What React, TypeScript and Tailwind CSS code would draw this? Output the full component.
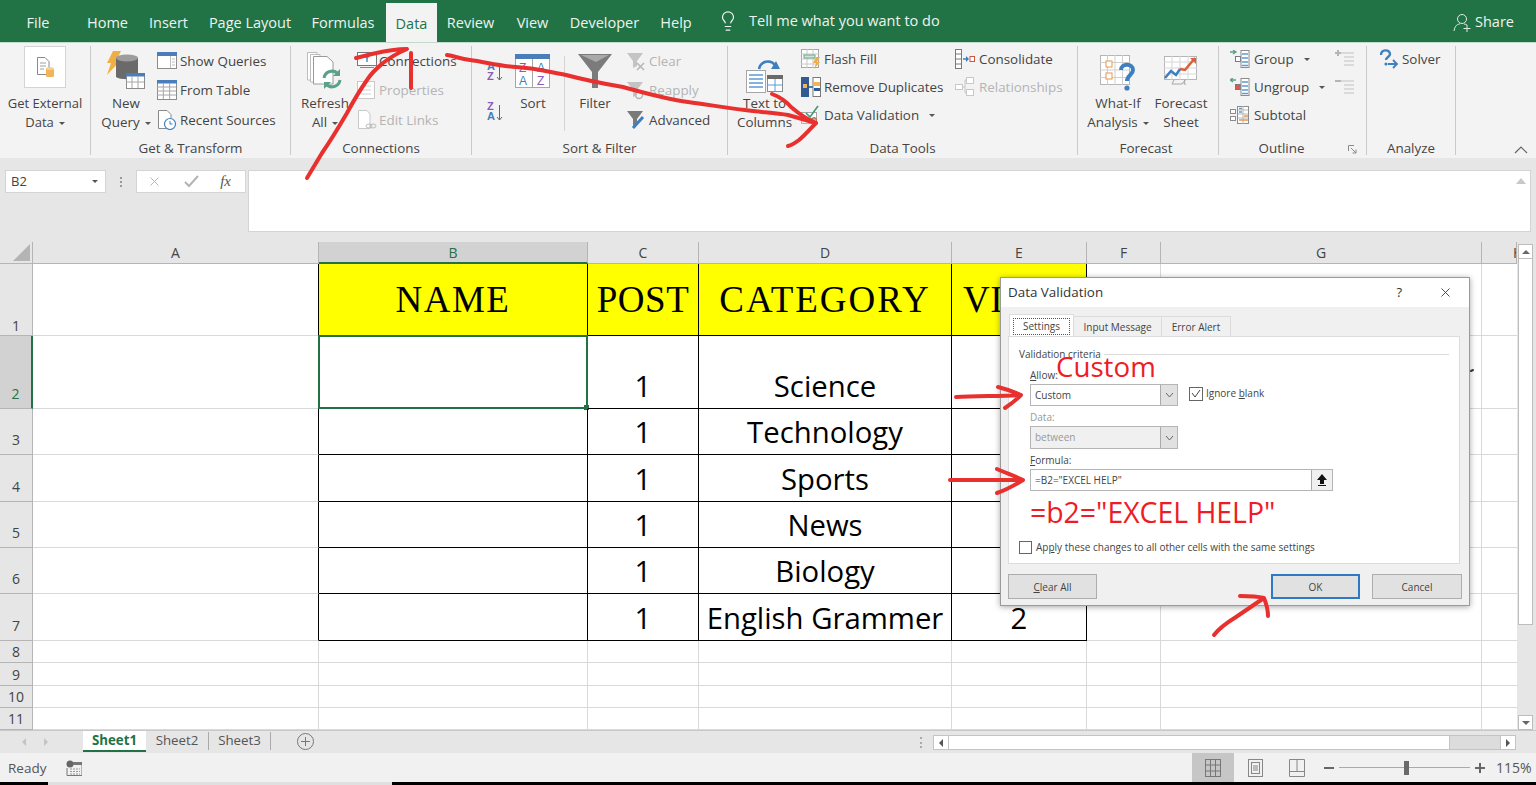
import type { ReactNode } from "react";
import clsx from "clsx";
import { Lightbulb, X } from "lucide-react";

const tabs = [
  { name: "File", w: "w-[76px] pt-[4px]" },
  { name: "Home", w: "w-[63px] pt-[4px]" },
  { name: "Insert", w: "w-[59px] pt-[4px]" },
  { name: "Page Layout", w: "w-[104px] pt-[4px]" },
  { name: "Formulas", w: "w-[82px] pt-[4px]" },
  { name: "Data", w: "w-[51px] ml-[2px] mt-[3px] pt-[2px] bg-[#f3f3f3] text-[#217346]" },
  { name: "Review", w: "w-[67px] pt-[4px]" },
  { name: "View", w: "w-[55px] ml-[1px] pt-[4px]" },
  { name: "Developer", w: "w-[89px] pt-[4px]" },
  { name: "Help", w: "w-[54px] pt-[4px]" },
];

const Svg = ({ w, h, children, className }: { w: number; h: number; children: ReactNode; className?: string }) => (
  <svg width={w} height={h} viewBox={`0 0 ${w} ${h}`} fill="none" className={clsx("shrink-0", className)}>
    {children}
  </svg>
);

// little table with a blue header, used by a few of the ribbon icons
const MiniTable = ({ x, y, w, h, cols = 3, rows = 3, head = "#4a7ebb" }: { x: number; y: number; w: number; h: number; cols?: number; rows?: number; head?: string }) => (
  <g>
    <rect x={x + 0.5} y={y + 0.5} width={w} height={h} fill="#fff" stroke="#8c8c8c" />
    <rect x={x} y={y} width={w + 1} height={3.5} fill={head} />
    {Array.from({ length: cols - 1 }).map((_, i) => (
      <path key={i} d={`M${x + ((i + 1) * w) / cols} ${y + 3}V${y + h}`} stroke="#a6a6a6" />
    ))}
    {Array.from({ length: rows - 1 }).map((_, i) => (
      <path key={i} d={`M${x} ${y + 3 + ((i + 1) * (h - 3)) / rows}H${x + w}`} stroke="#a6a6a6" />
    ))}
  </g>
);

const Funnel = ({ color = "#7a7a7a" }: { color?: string }) => <path d="M1 2H17L11 10V15L7 17V10Z" fill={color} />;

const ExternalDataIcon = () => (
  <div className="flex h-[42px] w-[42px] items-center justify-center border border-[#d4d4d4] bg-white">
    <Svg w={20} h={22}>
      <path d="M2.5 1.5H10L14 5.5V18.5H2.5Z" fill="#fff" stroke="#8a8a8a" />
      <path d="M5 7H11M5 10H11M5 13H9" stroke="#a0a0a0" />
      <rect x="11" y="12" width="8" height="9" rx="1.5" fill="#f0b45a" />
      <ellipse cx="15" cy="12.5" rx="4" ry="1.6" fill="#f7d08f" />
    </Svg>
  </div>
);

const NewQueryIcon = () => (
  <Svg w={40} h={40}>
    <path d="M7 1H15L10 11H14L1 25L5 13H1Z" fill="#f0ae46" />
    <path d="M10 8C14 5 28 5 32 8V27C28 30 14 30 10 27Z" fill="#6a6a6a" />
    <ellipse cx="21" cy="8" rx="11" ry="3.4" fill="#9d9d9d" />
    <MiniTable x={20} y={23} w={18} h={15} cols={3} rows={2} />
  </Svg>
);

const ShowQueriesIcon = () => (
  <Svg w={20} h={17}>
    <rect x="0.5" y="0.5" width="19" height="16" fill="#fff" stroke="#8c8c8c" />
    <rect x="0" y="0" width="20" height="4" fill="#4a7ebb" />
    <path d="M13.5 4V16" stroke="#bcbcbc" />
    <path d="M15 7H18M15 10H18M15 13H18" stroke="#bcbcbc" />
  </Svg>
);

const FromTableIcon = () => (
  <Svg w={20} h={20}>
    <MiniTable x={0} y={0} w={19} h={19} cols={3} rows={4} />
  </Svg>
);

const RecentIcon = () => (
  <Svg w={20} h={20}>
    <path d="M1.5 0.5H10L14 4.5V18.5H1.5Z" fill="#fff" stroke="#8a8a8a" />
    <circle cx="13" cy="14" r="5.5" fill="#fff" stroke="#3f7fbf" strokeWidth="1.2" />
    <path d="M13 11V14H15.5" stroke="#3f7fbf" />
  </Svg>
);

const RefreshIcon = () => (
  <Svg w={38} h={40}>
    <path d="M1.5 1.5H11V29H1.5Z" fill="#fff" stroke="#bdbdbd" />
    <path d="M4.5 3.5H14V31H4.5Z" fill="#fff" stroke="#bdbdbd" />
    <path d="M7.5 5.5H21L27 11V33H7.5Z" fill="#fff" stroke="#9a9a9a" />
    <path d="M18 27A8 8 0 0 1 32 23" stroke="#5aa287" strokeWidth="3" />
    <path d="M34 29A8 8 0 0 1 20 33" stroke="#5aa287" strokeWidth="3" />
    <path d="M34 18V25H27Z" fill="#5aa287" />
    <path d="M18 38V31H25Z" fill="#5aa287" />
  </Svg>
);

const ConnectionsIcon = () => (
  <Svg w={20} h={17}>
    <rect x="0.5" y="0.5" width="19" height="13" fill="#fff" stroke="#777" />
    <path d="M6 3H14L10 7Z" fill="#4a90c8" />
    <path d="M10 6V10" stroke="#4a90c8" strokeWidth="1.5" />
    <path d="M3 15.5H17" stroke="#888" />
  </Svg>
);

const PropertiesIcon = () => (
  <Svg w={20} h={20}>
    <rect x="0.5" y="1.5" width="17" height="17" fill="#fff" stroke="#c8c8c8" />
    <path d="M4 6H14M4 10H14M4 14H14" stroke="#d0d0d0" />
  </Svg>
);

const EditLinksIcon = () => (
  <Svg w={20} h={20}>
    <path d="M1.5 0.5H10L13 4V18.5H1.5Z" fill="#fff" stroke="#c8c8c8" />
    <ellipse cx="12" cy="16" rx="3" ry="2" stroke="#bcbcbc" />
    <ellipse cx="16" cy="16" rx="3" ry="2" stroke="#bcbcbc" />
  </Svg>
);

const AzIcon = ({ top, bottom }: { top: string; bottom: string }) => (
  <Svg w={16} h={22}>
    <text x="0" y="9.5" fontSize="11" fontWeight="700" fontFamily="Liberation Sans" fill={top === "A" ? "#3f7fbf" : "#8a5cb8"}>{top}</text>
    <text x="0" y="20" fontSize="11" fontWeight="700" fontFamily="Liberation Sans" fill={bottom === "A" ? "#3f7fbf" : "#8a5cb8"}>{bottom}</text>
    <path d="M12.5 5V20M10 17L12.5 20L15 17" stroke="#666" />
  </Svg>
);

const SortIcon = () => (
  <Svg w={36} h={34}>
    <rect x="0.5" y="0.5" width="34" height="33" fill="#fff" stroke="#a6a6a6" />
    <rect x="0" y="0" width="35" height="5" fill="#4a7ebb" />
    <path d="M17.5 5V33" stroke="#a6a6a6" />
    <text x="4" y="18" fontSize="12" fontFamily="Liberation Sans" fill="#8a5cb8">Z</text>
    <text x="4" y="31" fontSize="12" fontFamily="Liberation Sans" fill="#3f7fbf">A</text>
    <text x="22" y="18" fontSize="12" fontFamily="Liberation Sans" fill="#3f7fbf">A</text>
    <text x="22" y="31" fontSize="12" fontFamily="Liberation Sans" fill="#8a5cb8">Z</text>
  </Svg>
);

const FilterIcon = () => (
  <Svg w={34} h={34}>
    <path d="M0 0H34L20 18V34H14V18Z" fill="#7b7b7b" />
    <path d="M3 1H31L18 8Z" fill="#a9a9a9" />
  </Svg>
);

const ClearIcon = () => (
  <Svg w={20} h={20}>
    <Funnel color="#c4c4c4" />
    <path d="M11 12L18 19M18 12L11 19" stroke="#b5b5b5" strokeWidth="1.5" />
  </Svg>
);

const ReapplyIcon = () => (
  <Svg w={20} h={20}>
    <Funnel color="#c4c4c4" />
    <circle cx="13" cy="15" r="3.5" stroke="#b5b5b5" strokeWidth="1.5" />
  </Svg>
);

const AdvancedIcon = () => (
  <Svg w={20} h={21}>
    <Funnel />
    <path d="M17 8L7 19" stroke="#3f7fbf" strokeWidth="3" />
  </Svg>
);

const TextColumnsIcon = () => (
  <Svg w={38} h={34}>
    <rect x="0.5" y="10.5" width="19" height="22" fill="#fff" stroke="#a6a6a6" />
    <path d="M3 15H17M3 19H17M3 23H17M3 27H17" stroke="#5d9ad6" strokeWidth="1.5" />
    <rect x="21.5" y="15.5" width="15" height="16" fill="#fff" stroke="#8c8c8c" />
    <rect x="21" y="15" width="16" height="4" fill="#6a6a6a" />
    <path d="M29 19V31M21 25H37" stroke="#5d9ad6" />
    <path d="M13 9A9 9 0 0 1 29 5" stroke="#3f7fbf" strokeWidth="2.5" />
    <path d="M25 9H34L30 1Z" fill="#3f7fbf" />
  </Svg>
);

const FlashFillIcon = () => (
  <Svg w={20} h={20}>
    <rect x="0.5" y="0.5" width="17" height="18" fill="#fff" stroke="#a6a6a6" />
    <path d="M0 5H18M0 10H18M0 15H18M6 0V19M12 0V19" stroke="#c8c8c8" />
    <rect x="3" y="6" width="11" height="3" fill="#cfe5d8" stroke="#6aa88a" />
    <path d="M15 8H19L16 13H19L13 20L15 14H12Z" fill="#f0ae46" />
  </Svg>
);

const RemoveDupIcon = () => (
  <Svg w={20} h={20}>
    <rect x="0" y="0" width="8" height="20" fill="#2f5a94" />
    <rect x="2" y="7" width="4" height="4" fill="#f0b45a" />
    <path d="M8 10H13" stroke="#3f7fbf" strokeWidth="2" />
    <rect x="12" y="0.5" width="7.5" height="19" fill="#fff" stroke="#7a7a7a" />
    <rect x="13" y="5" width="6" height="4" fill="#f0b45a" />
    <rect x="13" y="11" width="6" height="3" fill="#2f5a94" />
  </Svg>
);

const DataValIcon = () => (
  <Svg w={20} h={20}>
    <rect x="0.5" y="7.5" width="15" height="6" fill="#fff" stroke="#a6a6a6" />
    <path d="M5 8L9 12L17 1" stroke="#3f9a75" strokeWidth="1.6" />
    <rect x="0.5" y="14.5" width="15" height="4" fill="#f4f4f4" stroke="#b5b5b5" />
    <circle cx="13" cy="15" r="2.5" stroke="#d0563a" />
  </Svg>
);

const ConsolidateIcon = () => (
  <Svg w={20} h={20}>
    <rect x="0.5" y="0.5" width="6" height="19" fill="#fff" stroke="#7a7a7a" />
    <path d="M0 5H7M0 10H7M0 15H7" stroke="#7a7a7a" />
    <path d="M8 10H13" stroke="#3f7fbf" strokeWidth="1.5" />
    <path d="M11 7L14 10L11 13Z" fill="#3f7fbf" />
    <rect x="15" y="7.5" width="4.5" height="5" fill="#fff" stroke="#d0563a" />
  </Svg>
);

const RelationshipsIcon = () => (
  <Svg w={20} h={20}>
    <rect x="0.5" y="7.5" width="7" height="5" fill="#fff" stroke="#c8c8c8" />
    <rect x="11.5" y="0.5" width="7" height="6" fill="#fff" stroke="#c8c8c8" />
    <rect x="11.5" y="12.5" width="7" height="6" fill="#fff" stroke="#c8c8c8" />
    <path d="M8 10H10V3H11M10 10V16H11" stroke="#c8c8c8" />
  </Svg>
);

const WhatIfIcon = () => (
  <Svg w={36} h={36}>
    <rect x="0.5" y="0.5" width="29" height="29" fill="#fff" stroke="#b5b5b5" />
    <path d="M0 7.5H30M0 15H30M0 22.5H30M7.5 0V30M15 0V30M22.5 0V30" stroke="#cfcfcf" />
    <rect x="6" y="6" width="6" height="6" fill="#fff" stroke="#e8964a" />
    <rect x="6" y="18" width="6" height="6" fill="#fff" stroke="#e8964a" />
    <path d="M21 15C21 8 33 8 33 15C33 20 27 20 27 26" stroke="#3f7fbf" strokeWidth="4" />
    <circle cx="27" cy="33" r="2.6" fill="#3f7fbf" />
  </Svg>
);

const ForecastIcon = () => (
  <Svg w={34} h={29}>
    <rect x="0.5" y="0.5" width="32" height="23" fill="#fff" stroke="#b5b5b5" />
    <path d="M0 6H33M0 12H33M0 18H33M8 0V24M16 0V24M24 0V24" stroke="#d6d6d6" />
    <path d="M1 22L7 15L12 19L16 13" stroke="#3f7fbf" strokeWidth="2.5" />
    <path d="M16 13L21 14L26 8L31 2" stroke="#d8603c" strokeWidth="2.5" />
    <path d="M26 2H32V8Z" fill="#d8603c" />
    <path d="M10 24L8 28H18L21 24M21 24L20 28H22" stroke="#a6a6a6" />
  </Svg>
);

const GroupIcon = ({ plus = true }: { plus?: boolean }) => (
  <Svg w={20} h={18}>
    <path d={plus ? "M0 2H5M3 0L6 2L3 4" : "M6 2H1M3 0L0 2L3 4"} stroke="#5aa287" strokeWidth="1.3" />
    <rect x="5.5" y="6.5" width="5" height="5" fill={plus ? "#fff" : "#e2574c"} stroke="#7a7a7a" />
    <rect x="11" y="0.5" width="8" height="17" fill="#fff" stroke="#8c8c8c" />
    <path d="M12 4H18M12 8H18M12 12H18M12 15.5H18" stroke="#5d9ad6" strokeWidth="1.4" />
  </Svg>
);

const SubtotalIcon = () => (
  <Svg w={20} h={18}>
    <rect x="0.5" y="3.5" width="5" height="4" fill="#fff" stroke="#8c8c8c" />
    <rect x="0.5" y="10.5" width="5" height="4" fill="#fff" stroke="#8c8c8c" />
    <rect x="7.5" y="0.5" width="11" height="17" fill="#fff" stroke="#8c8c8c" />
    <path d="M8 4H18M8 8H18M8 12H18M13 0V18" stroke="#b5b5b5" />
    <path d="M14 10H18M9 14H18" stroke="#e8964a" strokeWidth="1.5" />
    <path d="M9 2.5H12M9 6H12" stroke="#5d9ad6" strokeWidth="1.5" />
  </Svg>
);

const OutlineSmall = ({ plus }: { plus?: boolean }) => (
  <Svg w={20} h={18}>
    <path d="M6 3H19M9 7H19M9 11H19M9 15H19" stroke="#d2d2d2" strokeWidth="1.5" />
    <path d={plus ? "M0 3H6M3 0V6" : "M0 3H6"} stroke="#b5b5b5" strokeWidth="2" />
  </Svg>
);

const SolverIcon = () => (
  <Svg w={20} h={20}>
    <path d="M2 6C2 0 11 0 11 5C11 8 7 8 7 11" stroke="#3f7fbf" strokeWidth="2.4" />
    <circle cx="7" cy="15" r="1.6" fill="#3f7fbf" />
    <path d="M9 15H18M14 11L18 15L14 19" stroke="#3f7fbf" strokeWidth="1.8" />
  </Svg>
);

const Caret = ({ className }: { className?: string }) => (
  <span className={clsx("inline-block h-0 w-0 border-x-[3px] border-t-[3px] border-x-transparent border-t-[#555] align-middle", className)} />
);

const Row = ({ icon, label, muted, caret, iconW = "w-[23px]", h = "h-[29.5px]" }: { icon: ReactNode; label: string; muted?: boolean; caret?: string; iconW?: string; h?: string }) => (
  <div className={clsx("flex items-center whitespace-nowrap", h, muted && "text-[#b4b4b4]")}>
    <span className={clsx("flex shrink-0 items-center", iconW)}>{icon}</span>
    {label}
    {caret && <Caret className={caret} />}
  </div>
);

const BigButton = ({ icon, lines, caret, className, iconClass }: { icon: ReactNode; lines: string[]; caret?: boolean; className: string; iconClass?: string }) => (
  <div className={clsx("flex shrink-0 flex-col items-center whitespace-nowrap leading-[19px]", className)}>
    <div className={clsx("flex h-[48px] items-start", iconClass)}>{icon}</div>
    {lines.map((l, i) => (
      <div key={l}>
        {l}
        {caret && i === lines.length - 1 && <Caret className="ml-[5px]" />}
      </div>
    ))}
  </div>
);

const Group = ({ w, label, children, corner, labelClass }: { w: string; label?: string; children: ReactNode; corner?: boolean; labelClass?: string }) => (
  <div className={clsx("relative flex shrink-0 flex-col border-r border-[#c9c9c9]", w)}>
    <div className="flex h-[95px]">{children}</div>
    <div className={clsx("text-center leading-[14px]", labelClass)}>{label}</div>
    {corner && (
      <Svg w={9} h={9} className="absolute bottom-[1px] right-[9px]">
        <path d="M0.5 6V0.5H6M3 3L8 8M8 4.5V8H4.5" stroke="#8a8a8a" />
      </Svg>
    )}
  </div>
);

const Ribbon = () => (
  <div className="flex h-[116px] border-t border-[#c5d9cc] bg-[#f3f3f3] pb-[3px] pt-[3px] text-[13.4px] text-[#444]">
    <Group w="w-[91px]">
      <BigButton className="w-[90px] text-[13px]" icon={<ExternalDataIcon />} lines={["Get External", "Data"]} caret iconClass="h-[44px]" />
    </Group>
    <Group w="w-[200px]" label="Get & Transform">
      <BigButton className="ml-[5px] w-[60px]" icon={<NewQueryIcon />} lines={["New", "Query"]} caret iconClass="pt-[4px]" />
      <div className="ml-[1px]">
        <Row icon={<ShowQueriesIcon />} label="Show Queries" />
        <Row icon={<FromTableIcon />} label="From Table" />
        <Row icon={<RecentIcon />} label="Recent Sources" />
      </div>
    </Group>
    <Group w="w-[181px]" label="Connections">
      <BigButton className="ml-[2px] w-[64px]" icon={<RefreshIcon />} lines={["Refresh", "All"]} caret iconClass="pt-[5px]" />
      <div>
        <Row iconW="w-[22px]" icon={<ConnectionsIcon />} label="Connections" />
        <Row iconW="w-[22px]" icon={<PropertiesIcon />} label="Properties" muted />
        <Row iconW="w-[22px]" icon={<EditLinksIcon />} label="Edit Links" muted />
      </div>
    </Group>
    <Group w="w-[256px]" label="Sort & Filter">
      <div className="flex w-[34px] shrink-0 flex-col gap-[18px] pl-[15px] pt-[14px]">
        <AzIcon top="A" bottom="Z" />
        <AzIcon top="Z" bottom="A" />
      </div>
      <BigButton className="w-[54px]" icon={<SortIcon />} lines={["Sort"]} iconClass="pt-[8px]" />
      <div className="mb-[10px] mt-[10px] w-[5px] shrink-0 border-r border-[#d4d4d4]" />
      <BigButton className="w-[60px]" icon={<FilterIcon />} lines={["Filter"]} iconClass="pt-[8px]" />
      <div className="ml-[1px]">
        <Row icon={<ClearIcon />} label="Clear" muted />
        <Row icon={<ReapplyIcon />} label="Reapply" muted />
        <Row icon={<AdvancedIcon />} label="Advanced" />
      </div>
    </Group>
    <Group w="w-[350px]" label="Data Tools">
      <BigButton className="w-[73px]" icon={<TextColumnsIcon />} lines={["Text to", "Columns"]} iconClass="pt-[14px]" />
      <div className="-mt-[1px] w-[154px] shrink-0">
        <Row h="h-[28px]" icon={<FlashFillIcon />} label="Flash Fill" />
        <Row h="h-[28px]" icon={<RemoveDupIcon />} label="Remove Duplicates" />
        <Row h="h-[28px]" icon={<DataValIcon />} label="Data Validation" caret="ml-[10px]" />
      </div>
      <div className="-mt-[1px]">
        <Row h="h-[28px]" iconW="w-[24px]" icon={<ConsolidateIcon />} label="Consolidate" />
        <Row h="h-[28px]" iconW="w-[24px]" icon={<RelationshipsIcon />} label="Relationships" muted />
      </div>
    </Group>
    <Group w="w-[141px]" label="Forecast" labelClass="pr-[4px]">
      <BigButton className="ml-[3px] w-[74px]" icon={<WhatIfIcon />} lines={["What-If", "Analysis"]} caret iconClass="pt-[9px]" />
      <BigButton className="w-[52px]" icon={<ForecastIcon />} lines={["Forecast", "Sheet"]} iconClass="pt-[10px]" />
    </Group>
    <Group w="w-[148px]" label="Outline" corner labelClass="pr-[22px]">
      <div className="-mt-[1px] ml-[11px] w-[105px] shrink-0">
        <Row h="h-[28px]" iconW="w-[24px]" icon={<GroupIcon />} label="Group" caret="ml-[10px]" />
        <Row h="h-[28px]" iconW="w-[24px]" icon={<GroupIcon plus={false} />} label="Ungroup" caret="ml-[10px]" />
        <Row h="h-[28px]" iconW="w-[24px]" icon={<SubtotalIcon />} label="Subtotal" />
      </div>
      <div className="-mt-[1px]">
        <div className="flex h-[28px] items-center"><OutlineSmall plus /></div>
        <div className="flex h-[28px] items-center"><OutlineSmall /></div>
      </div>
    </Group>
    <Group w="w-[89px]" label="Analyze">
      <div className="-mt-[1px] ml-[12px]">
        <Row h="h-[28px]" icon={<SolverIcon />} label="Solver" />
      </div>
    </Group>
    <div className="flex flex-1 items-end justify-end pb-[1px] pr-[8px]">
      <Svg w={14} h={8}>
        <path d="M1 7L7 1L13 7" stroke="#666" strokeWidth="1.2" />
      </Svg>
    </div>
  </div>
);

const FormulaBar = () => (
  <div className="flex h-[84px] gap-[2px] bg-[#e6e6e6] pl-[5px] pr-[5px] pt-[12px] text-[13px] text-[#444]">
    <div className="flex h-[23px] w-[101px] items-center justify-between border border-[#d4d4d4] bg-white px-[5px]">
      B2
      <Caret className="mr-[2px]" />
    </div>
    <div className="flex h-[23px] w-[26px] flex-col items-center justify-center gap-[2px]">
      <span className="h-[2px] w-[2px] bg-[#999]" />
      <span className="h-[2px] w-[2px] bg-[#999]" />
      <span className="h-[2px] w-[2px] bg-[#999]" />
    </div>
    <div className="flex h-[23px] w-[110px] items-center justify-between border border-[#d4d4d4] bg-white pl-[10px] pr-[14px]">
      <X size={15} strokeWidth={1.5} className="text-[#b4b4b4]" />
      <Svg w={15} h={13}>
        <path d="M1 7L5 11L14 1" stroke="#b4b4b4" strokeWidth="2" />
      </Svg>
      <span className="font-['Liberation_Serif'] text-[15px] italic text-[#555]">fx</span>
    </div>
    <div className="flex h-[62px] flex-1 justify-end border border-[#d4d4d4] bg-white pr-[4px] pt-[7px]">
      <Svg w={10} h={6}>
        <path d="M0 6L5 0L10 6Z" fill="#c8c8c8" />
      </Svg>
    </div>
  </div>
);

const colHeads = ["A", "B", "C", "D", "E", "F", "G", "H"];

const tableRows = [
  { n: "1", cells: ["NAME", "POST", "CATEGORY", "VIEWS"] },
  { n: "2", cells: ["", "1", "Science", ""] },
  { n: "3", cells: ["", "1", "Technology", ""] },
  { n: "4", cells: ["", "1", "Sports", ""] },
  { n: "5", cells: ["", "1", "News", ""] },
  { n: "6", cells: ["", "1", "Biology", ""] },
  { n: "7", cells: ["", "1", "English Grammer", "2"] },
  { n: "8", cells: ["", "", "", ""] },
  { n: "9", cells: ["", "", "", ""] },
  { n: "10", cells: ["", "", "", ""] },
  { n: "11", cells: ["", "", "", ""] },
];

const headerTracking = ["tracking-[1.5px]", "tracking-[0.5px]", "tracking-[2px]", "tracking-[0.5px] justify-start pl-[11px]"];

const Sheet = () => (
  <div className="flex h-[488px] bg-white">
    <div className="grid w-[1517px] grid-cols-[33px_286px_269px_111px_253px_135px_74px_321px_35px] grid-rows-[22px_72px_73px_46px_47px_46px_46px_47px_22px_23px_22px_22px] font-['Open_Sans',sans-serif]">
      <div className="flex items-end justify-end border-b border-r border-[#b5b5b5] bg-[#e6e6e6] pb-[2px] pr-[2px]">
        <Svg w={17} h={17}>
          <path d="M17 0V17H0Z" fill="#b4b4b4" />
        </Svg>
      </div>
      {colHeads.map((c) => (
        <div
          key={c}
          className={clsx(
            "flex items-center border-r text-[14px]",
            c === "H" ? "justify-start overflow-hidden pl-[31px]" : "justify-center",
            c === "B" ? "border-b-2 border-b-[#217346] border-r-[#b5b5b5] bg-[#d2d2d2] text-[#217346]" : "border-b border-[#b5b5b5] bg-[#e6e6e6] text-[#444]"
          )}
        >
          {c}
        </div>
      ))}
      {tableRows.map((r, i) => {
        const boxed = i < 7;
        return (
          <div key={r.n} className="contents">
            <div
              className={clsx(
                "flex items-end justify-center border-b border-r border-[#b5b5b5] text-[14px] leading-[18px]",
                i === 0 ? "pb-0" : boxed ? "pb-[5px]" : "pb-[1px]",
                r.n === "2" ? "border-r-2 border-r-[#217346] bg-[#d2d2d2] text-[#217346]" : "bg-[#e6e6e6] text-[#444]"
              )}
            >
              {r.n}
            </div>
            <div className={clsx("border-b border-[#d9d9d9]", "border-r", boxed ? "border-r-black" : "border-r-[#d9d9d9]")} />
            {r.cells.map((v, j) => (
              <div
                key={j}
                className={clsx(
                  "relative flex justify-center overflow-visible whitespace-nowrap border-b border-r",
                  boxed ? "border-black" : "border-[#d9d9d9]",
                  i === 0
                    ? clsx("items-center bg-[#ffff00] font-['Liberation_Serif',serif] text-[37px] font-normal text-black", headerTracking[j])
                    : "items-end text-[29.3px] leading-[43px] text-black"
                )}
              >
                {v}
                {r.n === "2" && j === 0 && (
                  <div className="absolute -inset-px border-2 border-[#217346]">
                    <span className="absolute -bottom-[3px] -right-[3px] h-[5px] w-[5px] bg-[#217346]" />
                  </div>
                )}
              </div>
            ))}
            <div className="border-b border-r border-[#d9d9d9]" />
            <div className="border-b border-r border-[#d9d9d9]" />
            <div className="border-b border-[#d9d9d9]" />
          </div>
        );
      })}
    </div>
    <div className="flex w-[19px] flex-col bg-[#e6e6e6] pl-[1px] pr-[3px] pt-[2px]">
      <div className="flex h-[15px] items-center justify-center border border-[#bdbdbd] bg-white">
        <span className="h-0 w-0 border-x-[4px] border-b-[4px] border-x-transparent border-b-[#666]" />
      </div>
      <div className="h-[366px] border border-t-0 border-[#bdbdbd] bg-white" />
      <div className="flex-1" />
      <div className="flex h-[15px] items-center justify-center border border-[#bdbdbd] bg-white">
        <span className="h-0 w-0 border-x-[4px] border-t-[4px] border-x-transparent border-t-[#666]" />
      </div>
    </div>
  </div>
);

const SheetTabs = () => (
  <div className="flex h-[23px] items-start border-t border-[#c8c8c8] bg-[#e6e6e6] font-['Open_Sans',sans-serif] text-[13.3px] text-[#555]">
    <div className="flex w-[83px] items-center gap-[18px] pl-[22px] pt-[7px]">
      <span className="h-0 w-0 border-y-[4px] border-r-[4px] border-y-transparent border-r-[#c4c4c4]" />
      <span className="h-0 w-0 border-y-[4px] border-l-[4px] border-y-transparent border-l-[#c4c4c4]" />
    </div>
    <div className="flex h-[21px] w-[63px] items-center justify-center border-b-2 border-[#217346] bg-white font-bold text-[#217346]">Sheet1</div>
    <div className="mt-[1px] flex h-[18px] w-[63px] items-center justify-center border-r border-[#aaa]">Sheet2</div>
    <div className="mt-[1px] flex h-[18px] w-[62px] items-center justify-center border-r border-[#aaa]">Sheet3</div>
    <div className="ml-[26px] mt-[2px] flex h-[17px] w-[17px] items-center justify-center rounded-full border border-[#777]">
      <Svg w={9} h={9}>
        <path d="M4.5 0V9M0 4.5H9" stroke="#777" />
      </Svg>
    </div>
    <div className="ml-[605px] mt-[6px] flex h-[11px] w-[4px] flex-col items-center justify-between">
      <span className="h-[2px] w-[2px] bg-[#aaa]" />
      <span className="h-[2px] w-[2px] bg-[#aaa]" />
      <span className="h-[2px] w-[2px] bg-[#aaa]" />
    </div>
    <div className="ml-[10px] mt-[4px] flex h-[15px] w-[583px] border border-[#c4c4c4] bg-[#dcdcdc]">
      <div className="flex w-[15px] items-center justify-center border-r border-[#c4c4c4] bg-white">
        <span className="h-0 w-0 border-y-[4px] border-r-[4px] border-y-transparent border-r-[#555]" />
      </div>
      <div className="w-[501px] border-r border-[#c4c4c4] bg-white" />
      <div className="flex-1" />
      <div className="flex w-[15px] items-center justify-center border-l border-[#c4c4c4] bg-white">
        <span className="h-0 w-0 border-y-[4px] border-l-[4px] border-y-transparent border-l-[#555]" />
      </div>
    </div>
  </div>
);

const StatusBar = () => (
  <div className="flex h-[29px] items-center bg-[#f1f1f1] font-['Open_Sans',sans-serif] text-[13.5px] text-[#555]">
    <div className="w-[66px] pl-[8px] pt-[1px]">Ready</div>
    <Svg w={16} h={16}>
      <circle cx="4" cy="4" r="3.5" fill="#666" />
      <path d="M7 2.5H16V15.5H1V8" stroke="#777" />
      <rect x="7" y="2" width="9" height="3" fill="#777" />
      <path d="M4 9H14M4 11.5H14M4 14H14" stroke="#999" strokeDasharray="2 1" />
    </Svg>
    <div className="ml-[1110px] flex h-full w-[42px] items-center justify-center bg-[#c6c6c6]">
      <Svg w={16} h={18}>
        <rect x="0.5" y="0.5" width="15" height="17" stroke="#777" />
        <path d="M0 6H16M0 12H16M5.5 0V18M10.5 0V18" stroke="#777" />
      </Svg>
    </div>
    <div className="flex w-[42px] justify-center">
      <Svg w={15} h={18}>
        <rect x="0.5" y="0.5" width="14" height="17" stroke="#888" />
        <rect x="3.5" y="3.5" width="8" height="11" stroke="#888" />
        <path d="M5 7H10M5 9H10M5 11H10" stroke="#888" />
      </Svg>
    </div>
    <div className="flex w-[42px] justify-center">
      <Svg w={16} h={18}>
        <path d="M0.5 0.5H15.5V17.5H0.5ZM0.5 12.5H15.5M8 0.5V12.5" stroke="#888" />
      </Svg>
    </div>
    <div className="ml-[6px] h-[2px] w-[10px] bg-[#666]" />
    <div className="relative ml-[5px] flex h-[14px] w-[131px] items-center">
      <div className="h-px w-full bg-[#aaa]" />
      <span className="absolute left-[65px] h-[14px] w-[5px] bg-[#6a6a6a]" />
    </div>
    <div className="relative ml-[5px] h-[10px] w-[10px]">
      <span className="absolute left-0 top-[4px] h-[2px] w-[10px] bg-[#666]" />
      <span className="absolute left-[4px] top-0 h-[10px] w-[2px] bg-[#666]" />
    </div>
    <div className="ml-[11px] whitespace-nowrap text-[14px]">115%</div>
  </div>
);

const DialogButton = ({ children, className }: { children: ReactNode; className?: string }) => (
  <div className={clsx("flex h-[25px] items-center justify-center border bg-[#e1e1e1] pt-[1px]", className ?? "w-[89px] border-[#adadad]")}>{children}</div>
);

const ComboArrow = () => (
  <div className="flex w-[17px] items-center justify-center border-l border-[#aaa] bg-[#e1e1e1]">
    <Svg w={9} h={6}>
      <path d="M1 1L4.5 5L8 1" stroke="#666" />
    </Svg>
  </div>
);

const Dialog = () => (
  <div className="absolute left-[1000px] top-[277px] h-[329px] w-[470px] border border-[#9a9a9a] bg-[#f0f0f0] font-['Open_Sans',sans-serif] text-[10px] text-[#444] shadow-[0_1px_6px_rgba(0,0,0,0.35)]">
    <div className="flex h-[29px] items-center bg-white pl-[7px] text-[13.4px] text-[#333]">
      <span className="flex-1">Data Validation</span>
      <span className="mr-[36px] text-[13px]">?</span>
      <X size={15} strokeWidth={1.4} className="mr-[16px]" />
    </div>
    <div className="flex h-[29px] items-end pl-[8px]">
      <div className="flex h-[22px] w-[65px] items-center justify-center border border-b-0 border-[#dcdcdc] bg-white pt-[1px]">
        <span className="border border-dotted border-[#555] px-[9px] leading-[15px]">Settings</span>
      </div>
      <div className="flex h-[20px] w-[88px] items-center justify-center border-r border-t border-[#dcdcdc] pt-[1px]">Input Message</div>
      <div className="flex h-[20px] w-[69px] items-center justify-center border-r border-t border-[#dcdcdc] pt-[1px]">Error Alert</div>
    </div>
    <div className="mx-[7px] h-[228px] w-[452px] border border-[#dcdcdc] bg-white px-[10px]">
      <div className="flex items-center gap-[3px] pt-[9px] leading-[16px]">
        Validation criteria
        <div className="h-px flex-1 bg-[#dcdcdc]" />
      </div>
      <div className="pl-[11px]">
        <div className="mb-[1px] mt-[5px] leading-[16px]"><span className="underline">A</span>llow:</div>
        <div className="flex items-center">
          <div className="flex h-[22px] w-[148px] border border-[#b5b5b5]">
            <span className="flex flex-1 items-center pl-[4px]">Custom</span>
            <ComboArrow />
          </div>
          <span className="mb-[3px] ml-[11px] flex h-[14px] w-[14px] items-center justify-center border border-[#666]">
            <Svg w={10} h={9}>
              <path d="M1 4L4 8L9 1" stroke="#444" />
            </Svg>
          </span>
          <span className="mb-[3px] ml-[3px]">Ignore <span className="underline">b</span>lank</span>
        </div>
        <div className="mt-[3px] leading-[17px] text-[#999]">Data:</div>
        <div className="flex h-[23px] w-[148px] border border-[#b5b5b5] bg-[#f0f0f0] text-[#999]">
          <span className="flex flex-1 items-center pl-[4px]">between</span>
          <ComboArrow />
        </div>
        <div className="mt-[3px] leading-[17px]"><span className="underline">F</span>ormula:</div>
        <div className="flex h-[22px] w-[303px] border border-[#b5b5b5]">
          <span className="flex flex-1 items-center pl-[4px]">=B2="EXCEL HELP"</span>
          <div className="flex w-[21px] items-center justify-center border-l border-[#aaa] bg-[#f0f0f0]">
            <Svg w={10} h={12}>
              <path d="M5 0L10 6H7V10H3V6H0Z" fill="#111" />
              <path d="M1 11.5H9" stroke="#111" />
            </Svg>
          </div>
        </div>
      </div>
      <div className="mt-[49px] flex items-center gap-[4px]">
        <span className="h-[13px] w-[13px] border border-[#666]" />
        <span>Ap<span className="underline">p</span>ly these changes to all other cells with the same settings</span>
      </div>
    </div>
    <div className="mx-[7px] mt-[10px] flex">
      <DialogButton><span><span className="underline">C</span>lear All</span></DialogButton>
      <DialogButton className="ml-[174px] w-[89px] border-2 border-[#2f78c6]">OK</DialogButton>
      <DialogButton className="ml-[12px] w-[90px] border-[#adadad]">Cancel</DialogButton>
    </div>
    {/* red notes typed over the dialog */}
    <div className="absolute left-[55px] top-[70px] font-['Open_Sans',sans-serif] text-[27.7px] leading-[36px] text-[#ee1c25]">Custom</div>
    <div className="absolute left-[29px] top-[215px] whitespace-nowrap font-['Open_Sans',sans-serif] text-[28.4px] leading-[38px] text-[#ee1c25]">=b2="EXCEL HELP"</div>
  </div>
);

const Scribbles = () => (
  <svg className="pointer-events-none absolute left-0 top-0" width={1536} height={785} fill="none" stroke="#e8302e" strokeWidth={4} strokeLinecap="round" strokeLinejoin="round">
    <path d="M307 178L322 153C331 140 340 125 347 113C354 100 360 90 367 80C372 72 377 68 383 63C392 56 400 52 407 49C395 49 385 51 372 54L356 58" />
    <path d="M411 53V88" />
    <path d="M447 55C455 56 460 59 470 60C485 62 500 66 516 67C535 68 550 72 566 75C585 80 605 84 623 87C645 93 665 99 688 102C710 105 728 108 745 110C760 112 775 113 788 115L816 123" />
    <path d="M772 94C780 97 786 101 791 107C798 113 806 119 816 123C810 129 805 135 799 140C795 143 792 145 788 146" />
    <path d="M956 397C975 396 1000 396 1021 395M998 387C1006 389 1014 392 1021 395C1016 400 1011 404 1005 408" />
    <path d="M950 480C975 480 1000 480 1023 480M997 469C1006 473 1015 476 1023 480C1015 485 1006 490 997 493" />
    <path d="M1214 635C1220 627 1228 622 1236 617C1245 611 1255 604 1264 598M1240 596C1248 596 1256 596 1264 598C1266 603 1268 608 1268 616" />
    <path d="M1471 371L1473 370" strokeWidth={2} stroke="#334" />
  </svg>
);

export default function App() {
  return (
    <div className="relative h-[785px] w-[1536px] overflow-hidden font-['Open_Sans',sans-serif]">
      {/* title bar and tabs */}
      <div className="flex h-[42px] items-stretch bg-[#217346] text-[14.5px] text-[#eef4f0]">
        {tabs.map((t) => (
          <div key={t.name} className={clsx("flex shrink-0 items-center justify-center", t.w)}>
            {t.name}
          </div>
        ))}
        <Lightbulb size={22} strokeWidth={1.3} className="ml-[14px] mt-[10px]" />
        <div className="ml-[10px] flex items-center pb-[1px]">Tell me what you want to do</div>
        <div className="ml-auto flex items-center gap-[4px] pr-[22px] pt-[2px]">
          <Svg w={18} h={19}>
            <circle cx="9" cy="6" r="4.5" stroke="#dfeae3" />
            <path d="M1 18C2 12 5 11 7 11M11 11C12 11 13 11.5 14 12M14 12V19M10.5 15.5H17.5" stroke="#dfeae3" />
          </Svg>
          Share
        </div>
      </div>
      <Ribbon />
      <FormulaBar />
      <Sheet />
      <SheetTabs />
      <StatusBar />
      <div className="flex h-[3px] bg-black">
        <div className="ml-[48px] w-[344px] bg-[#e0e0e0]" />
      </div>
      <Dialog />
      <Scribbles />
    </div>
  );
}
